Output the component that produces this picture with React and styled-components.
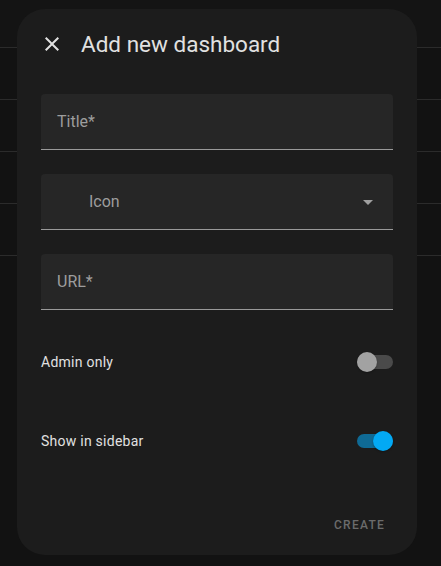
import React from "react";
import styled, { createGlobalStyle } from "styled-components";

const Global = createGlobalStyle`
  html, body { margin: 0; padding: 0; background: #111111; }
  body { font-family: Roboto, "Noto Sans", sans-serif; -webkit-font-smoothing: antialiased; }
  * { box-sizing: border-box; }
`;

const Page = styled.div`
  position: relative;
  width: 441px;
  height: 566px;
  overflow: hidden;
  background: #121212;
`;

const BackTable = styled.div`
  display: flex;
  flex-direction: column;
`;

const BackRow = styled.div`
  height: ${(p) => p.$h}px;
  border-bottom: 1px solid #2b2b2b;
  background: ${(p) => (p.$head ? "#141414" : "transparent")};
`;

const Dialog = styled.div`
  position: absolute;
  left: 17px;
  top: 9px;
  width: 400px;
  height: 546px;
  background: #1c1c1c;
  border-radius: 28px;
  display: flex;
  flex-direction: column;
  padding: 0 24px;
`;

const Header = styled.div`
  display: flex;
  align-items: center;
  height: 48px;
  margin-top: 11px;
  margin-left: -13px;
`;

const CloseButton = styled.button`
  width: 48px;
  height: 48px;
  border: none;
  background: transparent;
  display: flex;
  align-items: center;
  justify-content: center;
  padding: 0;
  color: #e1e1e1;
`;

const Title = styled.h2`
  margin: 0 0 0 5px;
  font-size: 22.5px;
  font-weight: 400;
  color: #e1e1e1;
  letter-spacing: 0;
`;

const Body = styled.div`
  display: flex;
  flex-direction: column;
  gap: 24px;
  margin-top: 26px;
`;

const Field = styled.div`
  position: relative;
  height: 56px;
  background: #262626;
  border-radius: 4px 4px 0 0;
  border-bottom: 1px solid #9a9a9a;
  display: flex;
  align-items: center;
  padding-left: ${(p) => (p.$leading ? 48 : 16)}px;
  padding-right: 16px;
`;

const Label = styled.span`
  font-size: 16px;
  color: #9d9d9d;
  flex: 1;
`;

const Arrow = styled.span`
  width: 0;
  height: 0;
  border-left: 5px solid transparent;
  border-right: 5px solid transparent;
  border-top: 5px solid #a0a0a0;
  margin-right: 4px;
  margin-top: 2px;
`;

const Rows = styled.div`
  display: flex;
  flex-direction: column;
  margin-top: 24px;
`;

const ToggleRow = styled.div`
  height: ${(p) => p.$h}px;
  display: flex;
  align-items: center;
  justify-content: space-between;
`;

const RowLabel = styled.span`
  font-size: 14px;
  letter-spacing: 0.25px;
  color: #e1e1e1;
`;

const Switch = styled.div`
  position: relative;
  width: 36px;
  height: 14px;
  border-radius: 7px;
  background: ${(p) => (p.$on ? "#0f6a95" : "#4a4a4a")};
`;

const Thumb = styled.div`
  position: absolute;
  top: -3px;
  left: ${(p) => (p.$on ? 16 : 0)}px;
  width: 20px;
  height: 20px;
  border-radius: 50%;
  background: ${(p) => (p.$on ? "#03a9f4" : "#a2a2a2")};
  box-shadow: 0 1px 2px rgba(0, 0, 0, 0.3);
`;

const Footer = styled.div`
  margin-top: auto;
  display: flex;
  justify-content: flex-end;
  padding-bottom: 12px;
`;

const TextButton = styled.button`
  height: 36px;
  padding: 0 8px;
  border: none;
  background: transparent;
  font-family: Roboto, sans-serif;
  font-size: 12px;
  font-weight: 500;
  letter-spacing: 1.25px;
  color: #6b6b6b;
  text-transform: uppercase;
`;

export default function App() {
  return (
    <>
      <Global />
      <Page>
        <BackTable>
          <BackRow $h={48} $head />
          <BackRow $h={52} />
          <BackRow $h={52} />
          <BackRow $h={52} />
          <BackRow $h={52} />
        </BackTable>
        <Dialog>
          <Header>
            <CloseButton aria-label="Close">
              <svg width="24" height="24" viewBox="0 0 24 24">
                <path
                  fill="currentColor"
                  d="M19,6.41L17.59,5L12,10.59L6.41,5L5,6.41L10.59,12L5,17.59L6.41,19L12,13.41L17.59,19L19,17.59L13.41,12L19,6.41Z"
                />
              </svg>
            </CloseButton>
            <Title>Add new dashboard</Title>
          </Header>
          <Body>
            <Field>
              <Label>Title*</Label>
            </Field>
            <Field $leading>
              <Label>Icon</Label>
              <Arrow />
            </Field>
            <Field>
              <Label>URL*</Label>
            </Field>
          </Body>
          <Rows>
            <ToggleRow $h={55}>
              <RowLabel>Admin only</RowLabel>
              <Switch>
                <Thumb />
              </Switch>
            </ToggleRow>
            <ToggleRow $h={103}>
              <RowLabel>Show in sidebar</RowLabel>
              <Switch $on>
                <Thumb $on />
              </Switch>
            </ToggleRow>
          </Rows>
          <Footer>
            <TextButton disabled>Create</TextButton>
          </Footer>
        </Dialog>
      </Page>
    </>
  );
}
